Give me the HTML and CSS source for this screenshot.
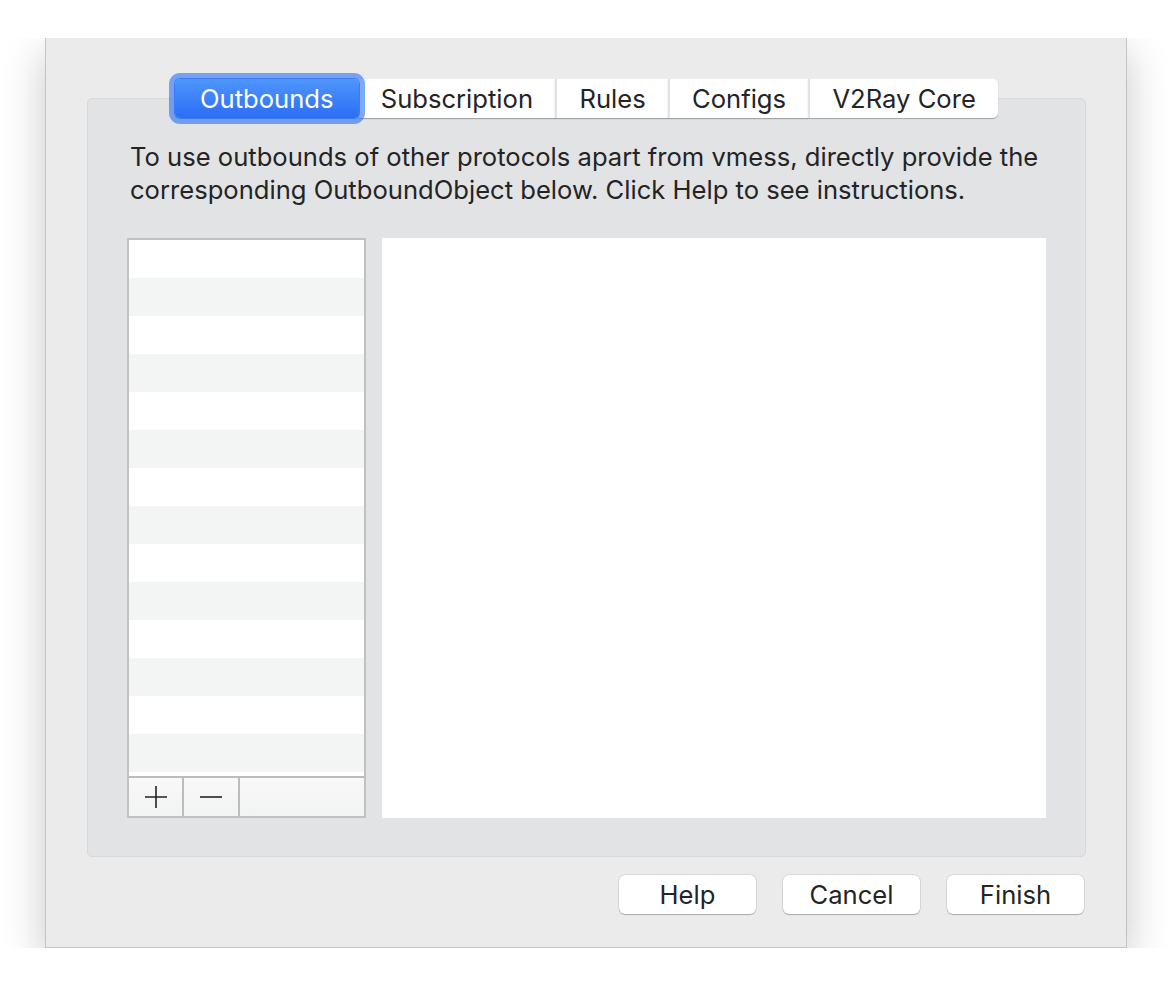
FILE: index.html
```html
<!DOCTYPE html>
<html lang="en">
<head>
    <meta charset="UTF-8">
    <title>Advanced Preferences</title>
    <link rel="stylesheet" href="styles.css">
</head>
<body>
    <div class="sheet">
        <div class="tabs">
            <div class="tab selected">Outbounds</div>
            <div class="tab">Subscription</div>
            <div class="tab">Rules</div>
            <div class="tab">Configs</div>
            <div class="tab">V2Ray Core</div>
        </div>

        <div class="tabbox">
            <p class="hint">To use outbounds of other protocols apart from vmess, directly provide the<br>corresponding OutboundObject below. Click Help to see instructions.</p>

            <div class="editor">
                <div class="list">
                    <div class="rows"></div>
                    <div class="list-bar">
                        <div class="bar-btn">
                            <svg width="24" height="24" viewBox="0 0 24 24"><path d="M12 1v22M1 12h22" stroke="#222" stroke-width="1.6" fill="none"/></svg>
                        </div>
                        <div class="bar-btn">
                            <svg width="24" height="24" viewBox="0 0 24 24"><path d="M1 12h22" stroke="#222" stroke-width="1.6" fill="none"/></svg>
                        </div>
                        <div class="bar-fill"></div>
                    </div>
                </div>
                <div class="text-area"></div>
            </div>
        </div>

        <div class="footer">
            <button class="push">Help</button>
            <button class="push">Cancel</button>
            <button class="push">Finish</button>
        </div>
    </div>
</body>
</html>
```

FILE: styles.css
```css
body {
    margin: 0;
    background: #fff;
    font-family: Inter, "Noto Sans", sans-serif;
    color: #242424;
}
.sheet {
    box-sizing: border-box;
    width: 1082px;
    height: 910px;
    margin: 38px 0 0 45px;
    padding: 41px 40px 0 41px;
    background: #ebebec;
    border: 1px solid #c4c4c4;
    border-top: none;
    box-shadow: 0 14px 40px rgba(0,0,0,0.22);
    clip-path: inset(0 -90px -90px -90px);
    display: flex;
    flex-direction: column;
}
.tabs {
    display: flex;
    justify-content: center;
    height: 39px;
    position: relative;
    z-index: 1;
}
.tab {
    height: 39px;
    line-height: 39px;
    padding: 0 22.2px;
    font-size: 25.6px;
    background: #fff;
    border-left: 2px solid #e2e2e2;
    box-shadow: 0 1px 1px rgba(0,0,0,0.28);
}
.tab:first-child {
    border-left: none;
    border-radius: 5px 0 0 5px;
}
.tab:last-child {
    border-radius: 0 5px 5px 0;
}
.tab + .tab.selected,
.tab.selected + .tab {
    border-left: none;
}
.tab.selected {
    position: relative;
    padding: 0 25px;
    color: #fff;
    background: linear-gradient(#4f96fc, #2a6ef5);
    border-radius: 5px;
    box-shadow: 0 0 0 1px #3b7bef, 0 0 0 6px rgba(40,110,245,0.6);
}
.tabbox {
    box-sizing: border-box;
    height: 759px;
    margin-top: -20px;
    padding: 41px 39px 0 39px;
    background: #e2e3e5;
    border: 1px solid #d8d8da;
    border-radius: 5px;
}
.hint {
    margin: 0 0 32px 0;
    padding-left: 3px;
    font-size: 25.6px;
    line-height: 33px;
}
.editor {
    display: flex;
    gap: 16px;
    height: 580px;
}
.list {
    box-sizing: border-box;
    width: 239px;
    border: 2px solid #c1c1c1;
    display: flex;
    flex-direction: column;
}
.rows {
    flex: 1;
    background: repeating-linear-gradient(#fff 0 38px, #f3f4f4 38px 76px);
}
.list-bar {
    height: 38px;
    border-top: 2px solid #bcbcbc;
    display: flex;
    background: linear-gradient(#f8f8f8, #f2f3f3);
}
.bar-btn {
    width: 53px;
    border-right: 2px solid #bcbcbc;
    display: flex;
    align-items: center;
    justify-content: center;
}
.bar-btn + .bar-btn {
    width: 54px;
}
.bar-fill {
    flex: 1;
}
.text-area {
    flex: 1;
    background: #fff;
}
.footer {
    display: flex;
    justify-content: flex-end;
    gap: 27px;
    margin: 18px 2px 0 0;
}
.push {
    width: 137px;
    height: 39px;
    padding: 0;
    font-family: inherit;
    font-size: 25.6px;
    color: #242424;
    background: #fff;
    border: none;
    border-radius: 6px;
    box-shadow: 0 0 0 0.5px rgba(0,0,0,0.16), 0 1px 1px rgba(0,0,0,0.22);
}
```
